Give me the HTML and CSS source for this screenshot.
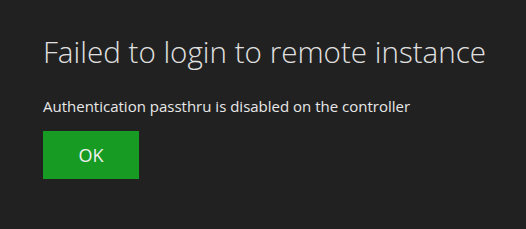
FILE: index.html
```html
<!DOCTYPE html>
<html>
<head>
<meta charset="utf-8">
<link rel="stylesheet" href="styles.css">
</head>
<body>
<div class="dialog">
  <h1 class="title">Failed to login to remote instance</h1>
  <p class="message">Authentication passthru is disabled on the controller</p>
  <button class="ok">OK</button>
</div>
</body>
</html>
```
FILE: styles.css
```css
html, body {
  margin: 0;
  padding: 0;
  background: #212121;
  height: 100%;
}
.dialog {
  padding: 32px 0 0 43px;
  display: flex;
  flex-direction: column;
  align-items: flex-start;
  font-family: "Open Sans", "Noto Sans", sans-serif;
  color: #e6e6e6;
}
.title {
  margin: 0;
  font-weight: 300;
  font-size: 29.6px;
  line-height: 40px;
  color: #e0e0e0;
}
.message {
  margin: 24px 0 0 0;
  font-size: 15px;
  line-height: 20px;
  color: #e8e8e8;
}
.ok {
  margin-top: 15px;
  width: 96px;
  height: 48px;
  border: none;
  background: #179b23;
  color: #f0f0f0;
  font-family: "Open Sans", sans-serif;
  font-size: 18px;
  padding: 0;
}
```
